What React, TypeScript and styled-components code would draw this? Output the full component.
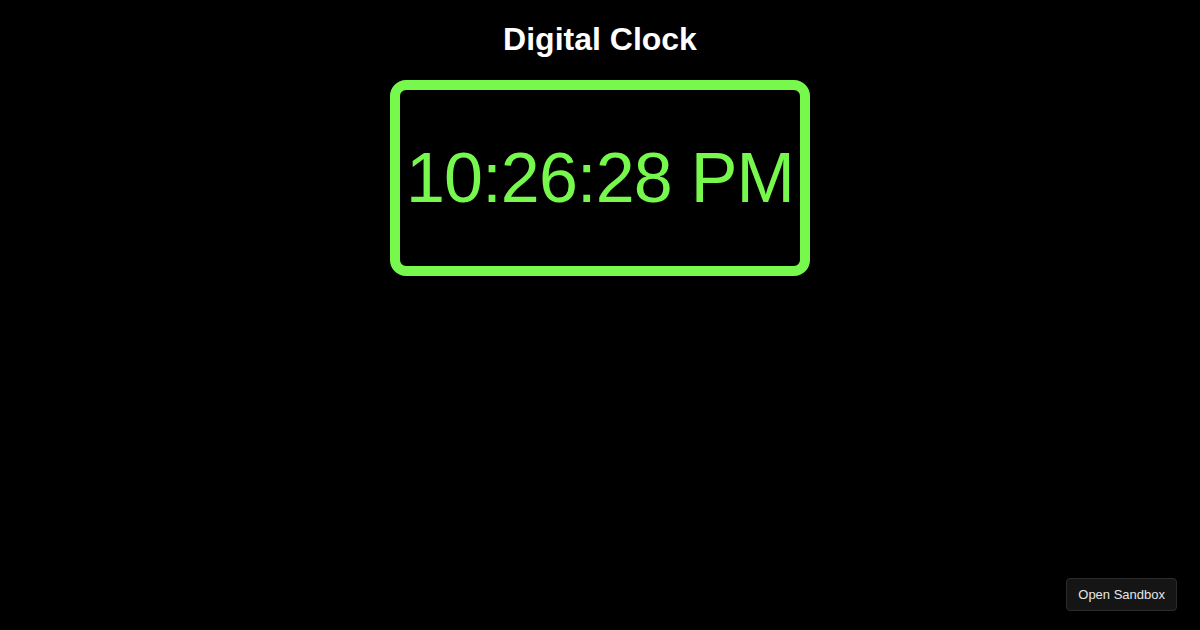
import React from "react";
import styled, { createGlobalStyle } from "styled-components";

const Global = createGlobalStyle`
  html, body {
    margin: 0;
    padding: 0;
    background: #000;
  }
  body {
    font-family: "Liberation Sans", Arial, sans-serif;
  }
`;

const Page = styled.div`
  min-height: 630px;
  background: #000;
  display: flex;
  flex-direction: column;
  align-items: center;
  overflow: hidden;
`;

const Title = styled.h1`
  margin: 21.44px 0;
  font-size: 32px;
  font-weight: 700;
  color: #fff;
  font-family: "Liberation Sans", Arial, sans-serif;
`;

const ClockFace = styled.div`
  width: 400px;
  padding: 48px 0;
  border: 10px solid #76f94c;
  border-radius: 16px;
  display: flex;
  justify-content: center;
`;

const Time = styled.div`
  font-size: 70px;
  letter-spacing: -0.8px;
  color: #76f94c;
  white-space: nowrap;
  font-family: "Liberation Sans", Arial, sans-serif;
`;

const SandboxButton = styled.button`
  position: fixed;
  right: 23px;
  bottom: 19px;
  height: 33px;
  padding: 0 11px;
  background: #151515;
  border: 1px solid #2c2c2c;
  border-radius: 4px;
  color: #e6e6e6;
  font-size: 13px;
  font-family: "Liberation Sans", Arial, sans-serif;
  cursor: pointer;
`;

export default function App() {
  return (
    <>
      <Global />
      <Page>
        <Title>Digital Clock</Title>
        <ClockFace>
          <Time>10:26:28 PM</Time>
        </ClockFace>
        <SandboxButton>Open Sandbox</SandboxButton>
      </Page>
    </>
  );
}
